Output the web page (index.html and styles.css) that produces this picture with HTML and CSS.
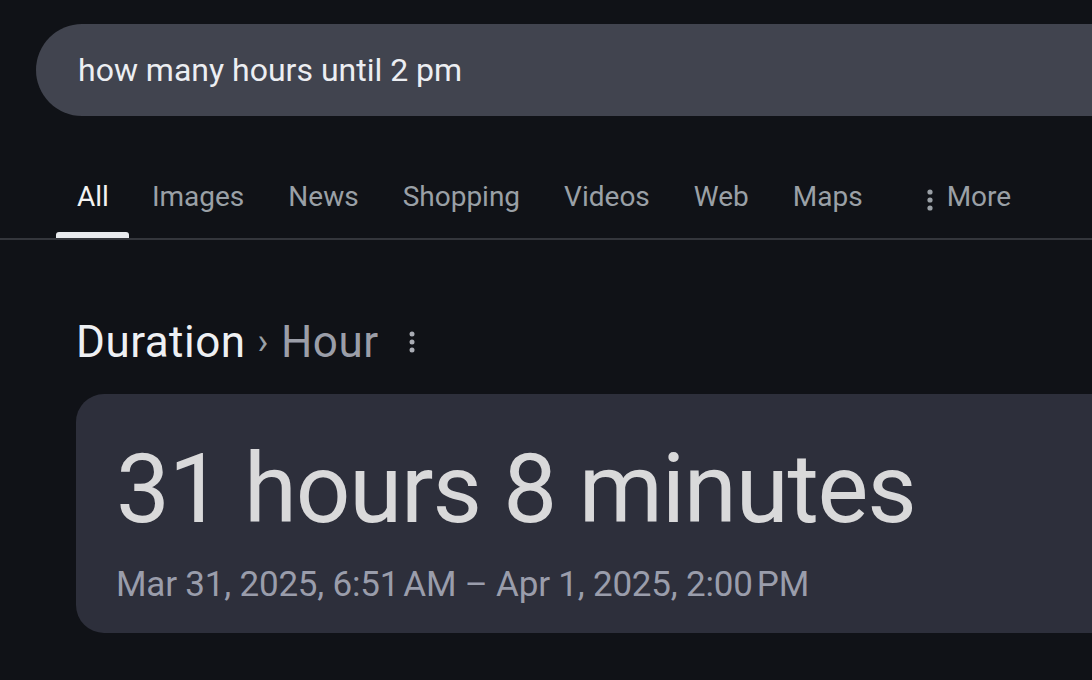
FILE: index.html
```html
<!DOCTYPE html>
<html>
<head>
<meta charset="utf-8">
<link rel="stylesheet" href="styles.css">
</head>
<body>
<div class="page">
  <div class="search-wrap">
    <div class="search-bar">how many hours until 2 pm</div>
  </div>
  <nav class="tabs">
    <a class="tab active">All</a>
    <a class="tab">Images</a>
    <a class="tab">News</a>
    <a class="tab">Shopping</a>
    <a class="tab">Videos</a>
    <a class="tab">Web</a>
    <a class="tab">Maps</a>
    <a class="tab more"><svg class="dots" width="6" height="22" viewBox="0 0 6 22"><circle cx="3" cy="3" r="2.6" fill="currentColor"/><circle cx="3" cy="11" r="2.6" fill="currentColor"/><circle cx="3" cy="19" r="2.6" fill="currentColor"/></svg>More</a>
  </nav>
  <section class="result">
    <div class="crumbs">
      <span class="crumb-main">Duration</span>
      <span class="crumb-sep">›</span>
      <span class="crumb-sub">Hour</span>
      <svg class="crumb-menu" width="6" height="22" viewBox="0 0 6 22"><circle cx="3" cy="3" r="2.5" fill="currentColor"/><circle cx="3" cy="11" r="2.5" fill="currentColor"/><circle cx="3" cy="19" r="2.5" fill="currentColor"/></svg>
    </div>
    <div class="card">
      <div class="big">31 hours 8 minutes</div>
      <div class="range">Mar 31, 2025, 6:51&#8239;AM – Apr 1, 2025, 2:00&#8239;PM</div>
    </div>
  </section>
</div>
</body>
</html>
```
FILE: styles.css
```css
html, body {
  margin: 0;
  padding: 0;
  background: #101217;
  overflow: hidden;
  width: 1092px;
  height: 680px;
}
.page {
  font-family: Roboto, "Noto Sans", sans-serif;
}
.search-wrap {
  padding: 24px 0 0 36px;
}
.search-bar {
  width: 1200px;
  height: 92px;
  border-radius: 46px;
  background: #41444f;
  color: #eceef2;
  font-size: 32px;
  line-height: 92px;
  padding-left: 42px;
  box-sizing: border-box;
}
.tabs {
  display: flex;
  align-items: flex-end;
  margin-top: 52px;
  padding-left: 56px;
  border-bottom: 2px solid #34363c;
  height: 72px;
  box-sizing: border-box;
}
.tab {
  color: #9aa0a6;
  font-size: 28px;
  padding: 12px 21px 0 21px;
  height: 70px;
  display: flex;
  align-items: flex-start;
  box-sizing: border-box;
  margin-right: 2px;
  position: relative;
}
.tab.active {
  color: #f2f2f2;
  padding-right: 20px;
}
.tab.active::after {
  content: "";
  position: absolute;
  left: 0;
  right: 0;
  bottom: 0;
  height: 6px;
  background: #e8eaed;
  border-radius: 3px 3px 0 0;
}
.tab.more {
  margin-left: 20px;
  align-items: flex-start;
  gap: 14px;
}
.dots {
  margin-top: 9px;
}
.result {
  padding-left: 76px;
  padding-top: 76px;
}
.crumbs {
  display: flex;
  align-items: center;
  font-size: 44px;
  letter-spacing: 0.5px;
  height: 52px;
}
.crumb-main {
  color: #eef0f3;
}
.crumb-sep {
  color: #9aa0a6;
  margin: 0 12px;
  font-size: 36px;
}
.crumb-sub {
  color: #9b9ea8;
}
.crumb-menu {
  color: #a9acb4;
  margin-left: 30px;
}
.card {
  margin-top: 26px;
  width: 1100px;
  height: 239px;
  border-radius: 28px;
  background: #2d2f3b;
  padding: 40px 0 0 40px;
  box-sizing: border-box;
}
.big {
  color: #d9d9da;
  font-size: 96px;
  line-height: 110px;
  letter-spacing: -1.2px;
}
.range {
  color: #9a9dab;
  font-size: 35px;
  letter-spacing: -0.2px;
  margin-top: 20px;
}
```
